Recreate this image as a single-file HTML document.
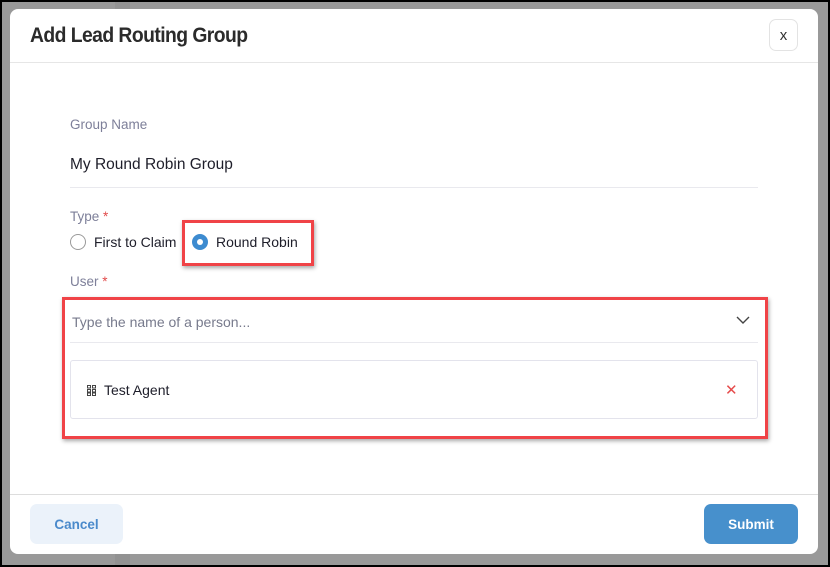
<!DOCTYPE html>
<html><head><meta charset="utf-8"><style>
*{box-sizing:border-box;margin:0;padding:0}
body{width:830px;height:567px;background:#000;position:relative;overflow:hidden;font-family:"Liberation Sans",sans-serif}
.bg{position:absolute;left:2px;top:2px;width:826px;height:563px;background:#999}
.strip{position:absolute;left:115px;top:2px;width:15px;height:563px;background:#929292}
.modal{position:absolute;left:10px;top:9px;width:808px;height:545px;background:#fff;border-radius:8px}
.title{position:absolute;left:20px;top:15px;font-size:21px;font-weight:bold;color:#2b2b2b;letter-spacing:-0.6px;transform:scaleX(0.92);transform-origin:left}
.close{position:absolute;left:759px;top:10px;width:29px;height:32px;border:1px solid #e3e3e3;border-radius:7px;text-align:center;line-height:31px;font-size:15px;color:#333}
.hl{position:absolute;left:0;width:808px;height:1px;background:#e6e6e6}
.lbl{position:absolute;font-size:13.5px;color:#7d7f99}
.req{color:#e24b4b}
.txt{position:absolute;font-size:15.5px;color:#1e1e2a}
.radio{position:absolute;width:16px;height:16px;border-radius:50%;border:1px solid #9a9a9a}
.radio.on{border:none;background:#3d8bd0}
.radio.on:after{content:"";position:absolute;left:5px;top:5px;width:6px;height:6px;border-radius:50%;background:#fff}
.red{position:absolute;border:3px solid #f04347;box-shadow:1px 2px 4px rgba(0,0,0,.35)}
.btn{position:absolute;top:495px;height:40px;border-radius:7px;font-size:13.5px;font-weight:bold;text-align:center;line-height:41px}
</style></head><body>
<div class="bg"></div><div class="strip"></div>
<div class="modal">
<div class="title">Add Lead Routing Group</div>
<div class="close">x</div>
<div class="hl" style="top:53px"></div>
<div class="lbl" style="left:60px;top:108px">Group Name</div>
<div class="txt" style="left:60px;top:147px">My Round Robin Group</div>
<div style="position:absolute;left:60px;top:178px;width:688px;height:1px;background:#e9e9ee"></div>
<div class="lbl" style="left:60px;top:200px">Type<span class="req"> *</span></div>
<div class="radio" style="left:60px;top:225px"></div>
<div class="txt" style="left:84px;top:225px;font-size:14px">First to Claim</div>
<div class="radio on" style="left:182px;top:225px"></div>
<div class="txt" style="left:206px;top:225px;font-size:14px">Round Robin</div>
<div class="lbl" style="left:60px;top:265px">User<span class="req"> *</span></div>
<div class="txt" style="left:62px;top:305px;font-size:14px;color:#777a8c">Type the name of a person...</div>
<svg style="position:absolute;left:726px;top:307px" width="14" height="9"><path d="M1 1l6 6 6-6" fill="none" stroke="#444" stroke-width="1.4"/></svg>
<div style="position:absolute;left:60px;top:333px;width:688px;height:1px;background:#e9e9ee"></div>
<div style="position:absolute;left:60px;top:351px;width:688px;height:59px;border:1px solid #e3e3ec;border-radius:3px"></div>
<svg style="position:absolute;left:77px;top:376px" width="9" height="11"><g fill="none" stroke="#444" stroke-width="1"><rect x=".5" y=".5" width="3" height="2.5"/><rect x="5.5" y=".5" width="3" height="2.5"/><rect x=".5" y="4.5" width="3" height="2.5"/><rect x="5.5" y="4.5" width="3" height="2.5"/><rect x=".5" y="8" width="3" height="2.5"/><rect x="5.5" y="8" width="3" height="2.5"/></g></svg>
<div class="txt" style="left:94px;top:373px;font-size:14px">Test Agent</div>
<div style="position:absolute;left:715px;top:372px;color:#e64b4b;font-size:15px">✕</div>
<div class="hl" style="top:485px;background:#ddd"></div>
<div class="btn" style="left:20px;width:93px;background:#ebf2fa;color:#4a8acb">Cancel</div>
<div class="btn" style="left:694px;width:94px;background:#4790cc;color:#fff">Submit</div>
</div>
<div class="red" style="left:182px;top:220px;width:132px;height:46px"></div>
<div class="red" style="left:62px;top:297px;width:706px;height:142px"></div>
</body></html>
